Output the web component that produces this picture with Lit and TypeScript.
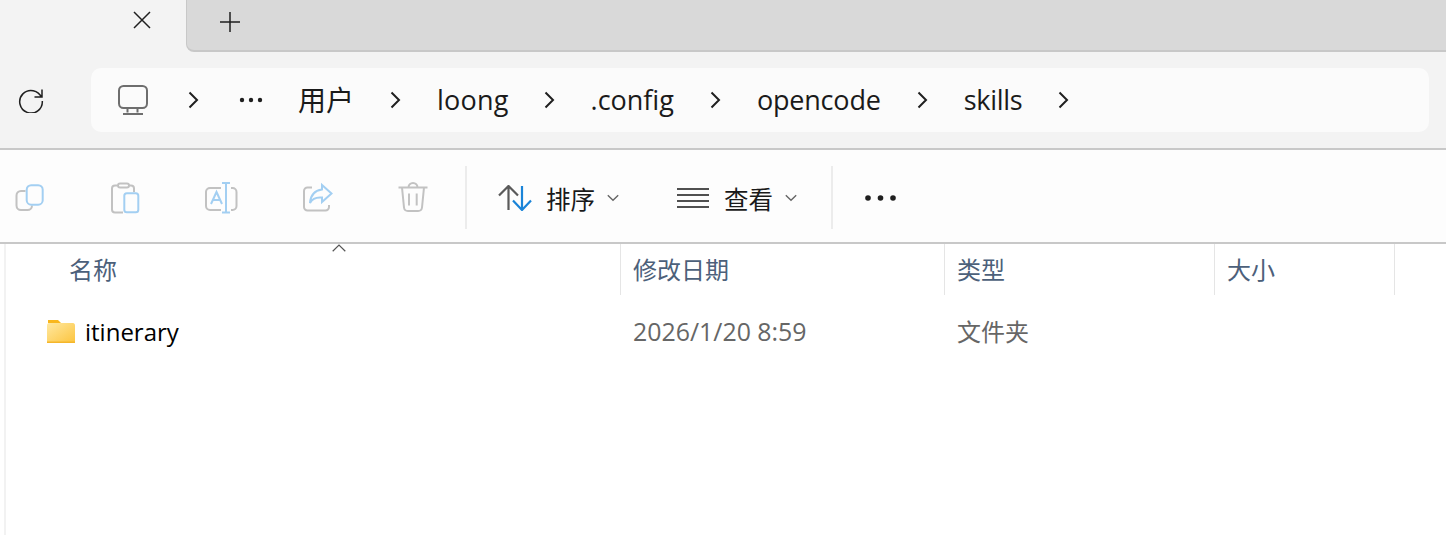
import { LitElement, html, css } from "lit";
import { customElement } from "lit/decorators.js";

const chevron = html`<svg class="chev" width="11" height="18" viewBox="0 0 11 18"><path d="M1.500 1.500 9 9l-7.500 7.500" fill="none" stroke="#1f1f1f" stroke-width="2"/></svg>`;
const caret = html`<svg class="caret" width="12" height="8" viewBox="0 0 12 8"><path d="M.8 1.200 6 6.200l5.200-5" fill="none" stroke="#666" stroke-width="1.400"/></svg>`;

@customElement("app-root")
export class AppRoot extends LitElement {
  static styles = css`
    :host {
      display: block;
      width: 1446px;
      height: 535px;
      overflow: hidden;
      background: #fff;
      font-family: "Open Sans", "Noto Sans CJK SC", sans-serif;
      color: #1a1a1a;
    }
    .tabs { display: flex; height: 52px; background: #f3f3f3; }
    .tab { width: 186px; box-sizing: border-box; padding: 11px 0 0 133px; }
    .tab svg { display: block; }
    .rest {
      flex: 1; box-sizing: border-box; background: #d9d9d9;
      border-left: 1px solid #c8c8c8; border-bottom: 2px solid #c8c8c8;
      border-bottom-left-radius: 8px; padding: 12px 0 0 33px;
    }
    .rest svg { display: block; }
    .nav {
      display: flex; align-items: center; height: 98px; box-sizing: border-box;
      background: #f3f3f3; border-bottom: 2px solid #c8c8c8; padding: 0 17px 0 18px;
    }
    .refresh { display: block; margin-right: 47px; flex: none; }
    .addr {
      flex: 1; height: 64px; background: #fbfbfb; border-radius: 10px;
      display: flex; align-items: center; gap: 36px; padding-left: 26px;
      font-size: 27px; color: #1a1a1a;
    }
    .addr span { margin-bottom: 2px; }
    .addr svg { display: block; flex: none; }
    .addr .pc { margin-right: 3px; }
    .addr .dots { margin-left: 4px; }
    .addr .cjk { font-size: 28px; margin-left: -1px; }
    .addr .loong { letter-spacing: 0.200px; margin-right: -1px; }
    .addr .opencode { letter-spacing: -0.200px; }
    .addr .skills { letter-spacing: -0.300px; }
    .toolbar {
      display: flex; align-items: center; height: 94px; box-sizing: border-box;
      background: #fdfdfd; border-bottom: 2px solid #c8c8c8; padding: 4px 0 0 9px;
    }
    .ghost { display: flex; gap: 56px; }
    .ghost svg { display: block; }
    .sep { width: 2px; height: 63px; background: #ececec; flex: none; margin-top: -2px; }
    .sep.one { margin: -2px 0 0 32px; }
    .btn { display: flex; align-items: center; font-size: 24.500px; color: #1a1a1a; }
    .btn svg { display: block; flex: none; }
    .sort { margin-left: 31px; }
    .sort .label { margin-left: 14px; }
    .sort .caret { margin-left: 12px; }
    .view { margin-left: 58px; margin-right: 34px; }
    .view .label { margin-left: 15px; }
    .view .caret { margin-left: 12px; }
    .more { margin-left: 32px; display: block; }
    .list { margin-left: 4px; border-left: 2px solid #f2f2f2; height: 291px; box-sizing: border-box; position: relative; }
    .head, .row { display: grid; grid-template-columns: 615px 324px 270px 180px 1fr; }
    .head { height: 51px; font-size: 24px; color: #4c607a; }
    .cell { display: flex; align-items: center; padding: 0 0 2px 12px; border-right: 1px solid #e5e5e5; }
    .cell:first-child { padding-left: 63px; }
    .cell:last-child { border-right: none; }
    .sortmark { position: absolute; left: 326px; top: 0; display: block; }
    .row { height: 72px; font-size: 24px; color: #666; }
    .row .c { display: flex; align-items: center; padding-left: 12px; }
    .row .c:first-child { padding-left: 41px; color: #000; gap: 10px; }
    .row .date { font-size: 24.900px; }
    .row .kind { padding-bottom: 2px; }
    .row svg { display: block; flex: none; }
  `;

  render() {
    return html`
      <div class="tabs">
        <div class="tab">
          <svg width="18" height="18" viewBox="0 0 18 18"><path d="M1 1l16 16M17 1 1 17" stroke="#1f1f1f" stroke-width="1.500" fill="none"/></svg>
        </div>
        <div class="rest">
          <svg width="20" height="20" viewBox="0 0 20 20"><path d="M10 0v20M0 10h20" stroke="#1f1f1f" stroke-width="1.500" fill="none"/></svg>
        </div>
      </div>
      <div class="nav">
        <svg class="refresh" width="26" height="26" viewBox="0 0 26 26"><path d="M23.500 10.500A11.300 11.300 0 1 0 24.300 14M24 2.500v7.500h-7.500" fill="none" stroke="#1f1f1f" stroke-width="1.500"/></svg>
        <div class="addr">
          <svg class="pc" width="32" height="32" viewBox="0 0 32 32"><rect x="2" y="2" width="28" height="22" rx="4.500" fill="none" stroke="#6e6e6e" stroke-width="2"/><path d="M10.500 24v4.500M20.500 24v4.500M6 30h20" fill="none" stroke="#6e6e6e" stroke-width="2"/></svg>
          ${chevron}
          <svg class="dots" width="24" height="6" viewBox="0 0 24 6"><circle cx="3" cy="3" r="2.200" fill="#1f1f1f"/><circle cx="12" cy="3" r="2.200" fill="#1f1f1f"/><circle cx="21" cy="3" r="2.200" fill="#1f1f1f"/></svg>
          <span class="cjk">用户</span>${chevron}
          <span class="loong">loong</span>${chevron}
          <span>.config</span>${chevron}
          <span class="opencode">opencode</span>${chevron}
          <span class="skills">skills</span>${chevron}
        </div>
      </div>
      <div class="toolbar">
        <div class="ghost">
          <svg width="40" height="40" viewBox="0 0 40 40" fill="none" stroke-width="2">
            <path d="M16.500 13H12a4.500 4.500 0 0 0-4.500 4.500v10a4.500 4.500 0 0 0 4.500 4.500h6.500a4.500 4.500 0 0 0 4.500-4.500" stroke="#c2c2c2"/>
            <rect x="17.700" y="7.200" width="16" height="19.500" rx="4.500" stroke="#a3cff2"/>
          </svg>
          <svg width="40" height="40" viewBox="0 0 40 40" fill="none" stroke-width="2">
            <path d="M12.500 7.500H10a3 3 0 0 0-3 3v21a3 3 0 0 0 3 3h8M24 7.500h2a3 3 0 0 1 3 3v3.500" stroke="#c2c2c2"/>
            <rect x="13" y="5.500" width="11" height="4" rx="2" stroke="#c2c2c2"/>
            <rect x="19.300" y="15.300" width="14" height="19" rx="2.500" stroke="#a3cff2"/>
          </svg>
          <svg width="40" height="40" viewBox="0 0 40 40" fill="none" stroke-width="2">
            <path d="M20 10H9a4 4 0 0 0-4 4v14a4 4 0 0 0 4 4h11M30 10h1.500a4 4 0 0 1 4 4v14a4 4 0 0 1-4 4H30" stroke="#c2c2c2"/>
            <path d="M25 5v29.500M21 5h8M21 34.500h8M10 26l5.500-12L21 26M11.800 22h7.500" stroke="#a3cff2"/>
          </svg>
          <svg width="40" height="40" viewBox="0 0 40 40" fill="none" stroke-width="2">
            <path d="M15 9.500h-4.500A3.500 3.500 0 0 0 7 13v16a3.500 3.500 0 0 0 3.500 3.500h18A3.500 3.500 0 0 0 32 29v-2" stroke="#c2c2c2"/>
            <path d="M25 7l9.500 8.500L25 24v-4.500c-5-.5-9.500.5-12 5.500.5-8 5-12.500 12-13.500z" stroke="#a3cff2"/>
          </svg>
          <svg width="40" height="40" viewBox="0 0 40 40" fill="none" stroke-width="2" stroke="#c2c2c2">
            <path d="M5.500 9.500h29M15.500 9.500a4.500 4.500 0 0 1 9 0M9 9.500l2 20a4 4 0 0 0 4 3.500h10a4 4 0 0 0 4-3.500l2-20M16 15.500v12M23.700 15.500v12"/>
          </svg>
        </div>
        <div class="sep one"></div>
        <div class="btn sort">
          <svg width="34" height="26" viewBox="0 0 34 26" fill="none" stroke-width="2.200">
            <path d="M10.500 25V1M1 10.500 10.500 1 20 10.500" stroke="#5a5a5a"/>
            <path d="M24 1v24M15 15.500 24 25l9-9.500" stroke="#1a84d8"/>
          </svg>
          <span class="label">排序</span>${caret}
        </div>
        <div class="btn view">
          <svg width="32" height="20" viewBox="0 0 32 20" fill="none" stroke="#505050" stroke-width="2"><path d="M0 1h32M0 7h32M0 13h32M0 19h32"/></svg>
          <span class="label">查看</span>${caret}
        </div>
        <div class="sep"></div>
        <svg class="more" width="32" height="6" viewBox="0 0 32 6"><circle cx="3" cy="3" r="2.800" fill="#1f1f1f"/><circle cx="15.500" cy="3" r="2.800" fill="#1f1f1f"/><circle cx="28" cy="3" r="2.800" fill="#1f1f1f"/></svg>
      </div>
      <div class="list">
        <svg class="sortmark" width="14" height="8" viewBox="0 0 14 8"><path d="M.7 7.200 7 1l6.300 6.200" fill="none" stroke="#555" stroke-width="1.200"/></svg>
        <div class="head">
          <div class="cell">名称</div>
          <div class="cell">修改日期</div>
          <div class="cell">类型</div>
          <div class="cell">大小</div>
          <div class="cell"></div>
        </div>
        <div class="row">
          <div class="c">
            <svg width="28" height="24" viewBox="0 0 28 24">
              <defs><linearGradient id="fg" x1="0" y1="0" x2="1" y2="1"><stop offset="0" stop-color="#ffe8a0"/><stop offset="1" stop-color="#fcc540"/></linearGradient></defs>
              <path d="M1 1h10l3 3H1z" fill="#f9b71c"/>
              <path d="M0 6.500C0 5 .8 4 2 4h24c1.200 0 2 1 2 2.500V23H0z" fill="url(#fg)"/>
              <path d="M0 22.500h28V24H0z" fill="#f5b62a"/>
            </svg>
            <span>itinerary</span>
          </div>
          <div class="c date">2026/1/20 8:59</div>
          <div class="c kind">文件夹</div>
          <div class="c"></div>
          <div class="c"></div>
        </div>
      </div>
    `;
  }
}
